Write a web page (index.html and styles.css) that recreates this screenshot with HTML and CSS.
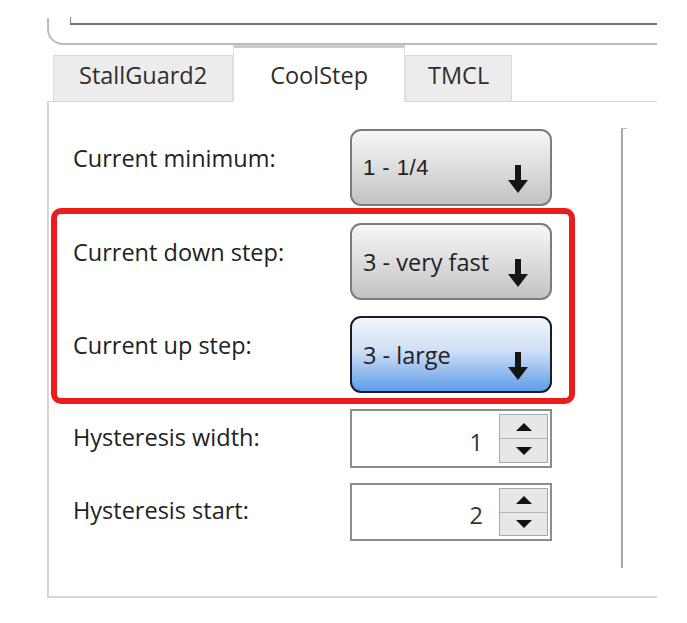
FILE: index.html
```html
<!DOCTYPE html>
<html>
<head>
<meta charset="utf-8">
<link rel="stylesheet" href="styles.css">
</head>
<body>
<div class="page">
  <div class="topbox"><div class="slider"></div></div>
  <div class="tabs">
    <div class="tab">StallGuard2</div>
    <div class="tab active">CoolStep</div>
    <div class="tab narrow">TMCL</div>
  </div>
  <div class="panel">
    <div class="form">
      <div class="row combo-row">
        <div class="label">Current minimum:</div>
        <div class="combo"><span class="combo-text arial">1 - 1/4</span><svg class="arrow" width="22" height="28" viewBox="0 0 22 28"><path d="M8 0 H14 V15 H21 L11 28 L1 15 H8 Z" fill="#151515"/></svg></div>
      </div>
      <div class="highlight">
        <div class="row combo-row">
          <div class="label">Current down step:</div>
          <div class="combo"><span class="combo-text">3 - very fast</span><svg class="arrow" width="22" height="28" viewBox="0 0 22 28"><path d="M8 0 H14 V15 H21 L11 28 L1 15 H8 Z" fill="#151515"/></svg></div>
        </div>
        <div class="row combo-row second">
          <div class="label">Current up step:</div>
          <div class="combo focused"><span class="combo-text">3 - large</span><svg class="arrow" width="22" height="28" viewBox="0 0 22 28"><path d="M8 0 H14 V15 H21 L11 28 L1 15 H8 Z" fill="#151515"/></svg></div>
        </div>
      </div>
      <div class="row spin-row first-spin">
        <div class="label">Hysteresis width:</div>
        <div class="spin"><span class="spin-value">1</span><div class="spin-buttons"><div class="spin-btn"><span class="tri-up"></span></div><div class="spin-btn"><span class="tri-down"></span></div></div></div>
      </div>
      <div class="row spin-row second-spin">
        <div class="label">Hysteresis start:</div>
        <div class="spin short"><span class="spin-value">2</span><div class="spin-buttons"><div class="spin-btn"><span class="tri-up"></span></div><div class="spin-btn"><span class="tri-down"></span></div></div></div>
      </div>
    </div>
    <div class="group"></div>
  </div>
</div>
</body>
</html>
```
FILE: styles.css
```css
* { box-sizing: border-box; }
body {
  margin: 0;
  background: #ffffff;
  font-family: "Open Sans", "DejaVu Sans", sans-serif;
  color: #222;
}
.page { width: 687px; height: 623px; overflow: hidden; }

.topbox {
  margin-left: 47px;
  margin-top: 18px;
  width: 610px;
  height: 27px;
  border-left: 2px solid #bcbcbc;
  border-bottom: 2px solid #bcbcbc;
  border-bottom-left-radius: 16px;
  padding-left: 21px;
  padding-top: 5px;
}
.slider {
  position: relative;
  height: 2px;
  background: #727272;
}
.slider::before {
  content: "";
  position: absolute;
  left: 0;
  top: -6px;
  width: 1px;
  height: 6px;
  background: #888;
}

.tabs {
  display: flex;
  align-items: flex-end;
  height: 56px;
  padding-left: 53px;
}
.tab {
  height: 46px;
  padding: 0 25px 10px;
  display: flex;
  align-items: flex-end;
  font-size: 23.5px;
  line-height: 32px;
  color: #2e2e2e;
  background: #ececec;
  border: 1px solid #dadada;
  border-bottom: none;
}
.tab.narrow { padding: 0 22px 10px; }
.tab.active {
  height: 57px;
  margin-bottom: -1px;
  padding: 0 36px 11px;
  background: #ffffff;
  border-top: 3px solid #cdcdcd;
  border-left: 1px solid #e0e0e0;
  border-right: 1px solid #e0e0e0;
  position: relative;
  z-index: 1;
}

.panel {
  margin-left: 47px;
  width: 610px;
  height: 497px;
  border-left: 2px solid #d6d6d6;
  border-top: 1px solid #d6d6d6;
  border-bottom: 2px solid #d6d6d6;
  display: flex;
  align-items: flex-start;
}
.form {
  width: 526px;
  padding-left: 2px;
  padding-top: 27px;
}
.row {
  display: flex;
  align-items: center;
  padding-left: 22px;
}
.label {
  width: 277px;
  font-size: 23.5px;
  line-height: 32px;
  color: #222;
}
.combo-row .label { padding-bottom: 20px; }
.spin-row .label { padding-bottom: 4px; }

.combo {
  width: 202px;
  height: 77px;
  border: 2px solid #7c7c7c;
  border-radius: 11px;
  background: linear-gradient(#f7f7f7, #c3c3c3);
  display: flex;
  align-items: center;
  justify-content: space-between;
  padding-left: 11px;
}
.combo.focused {
  border-color: #1c1c28;
  background: linear-gradient(#f2f5fb, #cfdff4 45%, #5e9de9);
}
.combo-text {
  font-size: 23.5px;
  line-height: 32px;
  color: #222;
}
.combo-text.arial {
  font-family: "Liberation Sans", Arial, sans-serif;
  font-size: 22px;
  letter-spacing: 0.5px;
}
.arrow {
  align-self: flex-end;
  margin-bottom: 11px;
  margin-right: 21px;
  flex: none;
}

.highlight {
  margin-top: 2px;
  width: 524px;
  border: 6px solid #ec1c1c;
  border-radius: 10px;
  padding: 9px 0 5px;
}
.highlight .row { padding-left: 16px; }
.highlight .row.second { margin-top: 16px; }

.first-spin { margin-top: 5px; }
.second-spin { margin-top: 15px; }
.spin {
  width: 202px;
  height: 59px;
  border: 2px solid #8c8c8c;
  background: #fff;
  display: flex;
  align-items: center;
  justify-content: flex-end;
  padding-right: 2px;
}
.spin.short { height: 58px; }
.spin-value {
  font-size: 23.5px;
  line-height: 32px;
  color: #333;
  margin-right: 16px;
  padding-top: 6px;
}
.spin-buttons {
  width: 49px;
  height: 49px;
  border: 1px solid #a9a9a9;
  background: #e7e7e7;
  display: flex;
  flex-direction: column;
}
.spin.short .spin-buttons { height: 48px; }
.spin-btn {
  flex: 1;
  display: flex;
  align-items: center;
  justify-content: center;
}
.spin-btn + .spin-btn { border-top: 1px solid #b4b4b4; }
.tri-up {
  width: 0; height: 0;
  border-left: 8px solid transparent;
  border-right: 8px solid transparent;
  border-bottom: 8px solid #111;
}
.tri-down {
  width: 0; height: 0;
  border-left: 8px solid transparent;
  border-right: 8px solid transparent;
  border-top: 8px solid #111;
}

.group {
  margin-left: 46px;
  margin-top: 26px;
  width: 6px;
  height: 440px;
  border-left: 2px solid #a8a8a8;
  border-top: 1px solid #bdbdbd;
}
```
